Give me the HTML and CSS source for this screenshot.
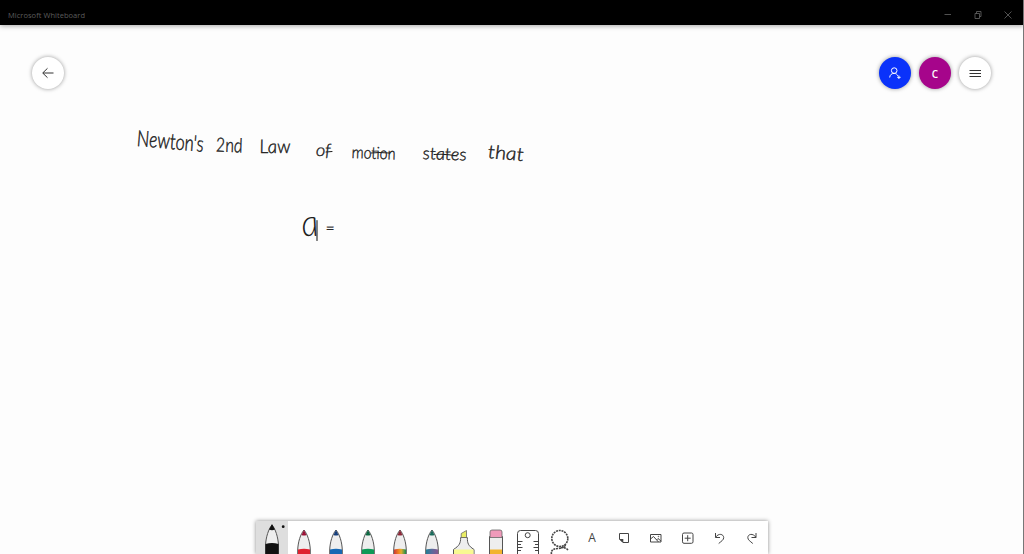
FILE: index.html
```
<!DOCTYPE html>
<html lang="en">
<head>
    <meta charset="UTF-8">
    <meta name="viewport" content="width=device-width, initial-scale=1.0">
    <title>Microsoft Whiteboard</title>
    <link rel="stylesheet" href="styles.css">
</head>
<body>
    <header class="titlebar">
        <span class="app-name">Microsoft Whiteboard</span>
        <div class="window-controls">
            <svg viewBox="0 0 10 10"><path d="M1.5 4.5h6.5"/></svg>
            <svg viewBox="0 0 10 10"><path d="M2 3.5h4.5v5H2zM3.5 3.5v-2H8v5H6.5"/></svg>
            <svg viewBox="0 0 10 10"><path d="M1.5 1.5l7 7M8.5 1.5l-7 7"/></svg>
        </div>
    </header>

    <nav class="top-actions">
        <button class="round back" aria-label="Back">
            <svg viewBox="0 0 16 16"><path d="M13.5 8H3M7.5 3.3L2.7 8l4.8 4.7"/></svg>
        </button>
        <button class="round invite" aria-label="Invite">
            <svg viewBox="0 0 16 16"><circle cx="7.2" cy="5.6" r="2.8"/><path d="M2.7 12.5c.2-2.6 1.7-4.100 4.500-4.100 1.800 0 3 1 3.700 2.500M10.200 12.300h3.400M11.900 10.600v3.400"/></svg>
        </button>
        <button class="round account">C</button>
        <button class="round menu" aria-label="Menu">
            <svg viewBox="0 0 16 16"><path d="M2.500 5.500h11.500M2.500 8.500h11.500M2.500 11.500h11.500"/></svg>
        </button>
    </nav>

    <main class="board">
        <svg class="ink" viewBox="0 0 1024 420">
            <g class="words">
                <text transform="translate(137 46) rotate(5) skewX(6) scale(1 1.3)" textLength="67" lengthAdjust="spacingAndGlyphs">Newton's</text>
                <text transform="translate(216 51.500) rotate(2) skewX(6) scale(1 1.150)" textLength="27" lengthAdjust="spacingAndGlyphs">2nd</text>
                <text transform="translate(260 53) skewX(6) scale(1 1.100)" textLength="31" lengthAdjust="spacingAndGlyphs">Law</text>
                <text transform="translate(316 56) skewX(2)" textLength="15" lengthAdjust="spacingAndGlyphs">of</text>
                <text transform="translate(352 58) rotate(2) skewX(6)" textLength="44" lengthAdjust="spacingAndGlyphs">motion</text>
                <text transform="translate(423 59) rotate(2) skewX(6)" textLength="44" lengthAdjust="spacingAndGlyphs">states</text>
                <text transform="translate(488 58) rotate(5) skewX(6) scale(1 1.100)" textLength="36" lengthAdjust="spacingAndGlyphs">that</text>
                <text class="variable" transform="translate(303 136) skewX(9) scale(1 1.150)" textLength="17" lengthAdjust="spacingAndGlyphs">a</text>
                <text transform="translate(326 134) skewX(4)" textLength="9" lengthAdjust="spacingAndGlyphs">=</text>
            </g>
            <!-- long pen strokes that run across the words -->
            <path class="stroke" d="M326 52l6-.5M371 53q8-1 18 0M434 54.500q12-1 23 1.500M317 120.500v20"/>
        </svg>
    </main>

    <footer class="toolbar">
        <button class="tool selected" aria-label="Black pen">
            <svg viewBox="0 0 32 33">
                <path class="barrel" d="M16 4c-3.500 4-6 12-6.500 20v10h13V24C22 16 19.500 8 16 4z"/>
                <path d="M9.500 23q6.500-2 13 0v11h-13z" fill="#111"/>
                <path d="M16 3l-3 5.500q3 1.500 6 0z" fill="#111"/>
                <circle cx="27.200" cy="5.700" r="1.400" fill="#111"/>
            </svg>
        </button>
        <button class="tool" aria-label="Red pen">
            <svg viewBox="0 0 32 33">
                <path class="barrel" d="M16 9c-3.500 4-6 12-6.300 20v5h12.600v-5C22 21 19.500 13 16 9z"/>
                <path d="M10 28.500q6-1.500 12 0V34H10z" fill="#df2230"/>
                <path d="M16 9l-2.500 5q2.500 1 5 0z" fill="#9b1237"/>
            </svg>
        </button>
        <button class="tool" aria-label="Blue pen">
            <svg viewBox="0 0 32 33">
                <path class="barrel" d="M16 9c-3.500 4-6 12-6.300 20v5h12.600v-5C22 21 19.500 13 16 9z"/>
                <path d="M10 28.500q6-1.500 12 0V34H10z" fill="#1768b4"/>
                <path d="M16 9l-2.500 5q2.500 1 5 0z" fill="#173f7c"/>
            </svg>
        </button>
        <button class="tool" aria-label="Green pen">
            <svg viewBox="0 0 32 33">
                <path class="barrel" d="M16 9c-3.500 4-6 12-6.300 20v5h12.600v-5C22 21 19.500 13 16 9z"/>
                <path d="M10 28.500q6-1.500 12 0V34H10z" fill="#0f9a57"/>
                <path d="M16 9l-2.500 5q2.500 1 5 0z" fill="#0d6842"/>
            </svg>
        </button>
        <button class="tool" aria-label="Rainbow pen">
            <svg viewBox="0 0 32 33">
                <defs>
                    <linearGradient id="rainbow"><stop offset="0" stop-color="#c83838"/><stop offset=".35" stop-color="#ef7d20"/><stop offset=".6" stop-color="#e3ad2c"/><stop offset="1" stop-color="#158a52"/></linearGradient>
                </defs>
                <path class="barrel" d="M16 9c-3.500 4-6 12-6.300 20v5h12.600v-5C22 21 19.500 13 16 9z"/>
                <path d="M10 28.500q6-1.500 12 0V34H10z" fill="url(#rainbow)"/>
                <path d="M16 9l-2.500 5q2.500 1 5 0z" fill="#8c2838"/>
            </svg>
        </button>
        <button class="tool" aria-label="Galaxy pen">
            <svg viewBox="0 0 32 33">
                <defs>
                    <linearGradient id="galaxy"><stop offset="0" stop-color="#217f95"/><stop offset=".5" stop-color="#5c6b9c"/><stop offset="1" stop-color="#85578e"/></linearGradient>
                </defs>
                <path class="barrel" d="M16 9c-3.500 4-6 12-6.300 20v5h12.600v-5C22 21 19.500 13 16 9z"/>
                <path d="M10 28.500q6-1.500 12 0V34H10z" fill="url(#galaxy)"/>
                <path d="M16 9l-2.500 5q2.500 1 5 0z" fill="#1b6c5c"/>
            </svg>
        </button>
        <button class="tool" aria-label="Highlighter">
            <svg viewBox="0 0 32 33">
                <path class="barrel" d="M12.700 16.500h6.600c.2 6 .7 8 6.700 12v6H5.500v-6c6-4 7-6 7.200-12z"/>
                <path d="M6 28.500h19.500V34H6z" fill="#f8f991"/>
                <path class="thin" d="M13.200 16.500v-4l5.300-3v7z" fill="#e9ed64"/>
            </svg>
        </button>
        <button class="tool" aria-label="Eraser">
            <svg viewBox="0 0 32 33">
                <path class="barrel" d="M9.500 15.500h13V34h-13z"/>
                <path d="M10 28.500h12V34H10z" fill="#f2b42f"/>
                <path class="thin" d="M10 16.500V11q0-2 2-2h8q2 0 2 2v5.500z" fill="#f09aba"/>
            </svg>
        </button>
        <button class="tool" aria-label="Ruler">
            <svg class="outline" viewBox="0 0 32 33">
                <path d="M5.500 34V12.500q0-3 3-3h15q3 0 3 3V34"/>
                <circle cx="15.700" cy="14.200" r="2.500"/>
                <path d="M6 20.500h4.500M6 23.500h3M6 26.500h4.500M6 29.500h3M26 20.500h-4.500M26 23.500h-3M26 26.500h-4.500M26 29.500h-3"/>
            </svg>
        </button>
        <button class="tool" aria-label="Lasso select">
            <svg class="outline lasso" viewBox="0 0 32 33">
                <circle cx="15.800" cy="17.500" r="8"/>
                <path d="M21.500 24c-2 4-8 3-11 4-2.500.8-3.500 2.500-3 5.500M17 26.500c3 0 6 .5 7 3"/>
            </svg>
        </button>
        <button class="tool text-tool">A</button>
        <button class="tool" aria-label="Note">
            <svg class="outline" viewBox="0 0 32 33"><path d="M11.500 12.500h9v9H15l-3.500-3.500z"/><path d="M11 18h4.300v4z" fill="#444" stroke="none"/></svg>
        </button>
        <button class="tool" aria-label="Image">
            <svg class="outline" viewBox="0 0 32 33"><path d="M10.500 13.500h10.500v7.500h-10.500zM10.500 18l3-2.500 5 5.500M16.500 19l1.500-1.500 3 2.500"/><circle cx="18.500" cy="15.500" r=".3"/></svg>
        </button>
        <button class="tool" aria-label="Insert">
            <svg class="outline" viewBox="0 0 32 33"><rect x="10.500" y="12" width="10.500" height="10.300" rx="1.500"/><path d="M15.700 14.200v6M12.700 17.200h6"/></svg>
        </button>
        <button class="tool" aria-label="Undo">
            <svg class="outline" viewBox="0 0 32 33"><path d="M11.500 12v4.500h4.500M11.500 16.300c3.200-4.500 8-3.300 8.200.2 0 2.500-2.200 3.500-5 6"/></svg>
        </button>
        <button class="tool" aria-label="Redo">
            <svg class="outline" viewBox="0 0 32 33"><path d="M20 12v4.500h-4.500M20 16.300c-3.200-4.500-8-3.300-8.200.2 0 2.500 2.200 3.500 5 6"/></svg>
        </button>
    </footer>
</body>
</html>
```

FILE: styles.css
```
:root {
    --board-bg: #fdfdfd;
    --ink: #202020;
    --icon: #444;
}

* {
    box-sizing: border-box;
}

body {
    margin: 0;
    height: 554px;
    display: flex;
    flex-direction: column;
    overflow: hidden;
    background: var(--board-bg);
    font-family: "Open Sans", "Noto Sans", sans-serif;
    border-right: 1px solid #777;
}

button {
    border: 0;
    padding: 0;
    font-family: inherit;
    display: flex;
    align-items: center;
    justify-content: center;
}

.titlebar {
    flex: none;
    height: 25px;
    width: 1024px;
    padding: 5px 11px 0 8px;
    display: flex;
    align-items: center;
    justify-content: space-between;
    background: #000;
    color: #5c5c5c;
    box-shadow: 0 1px 5px rgba(0, 0, 0, 0.35);
}

.app-name {
    font-size: 7.5px;
    letter-spacing: 0.04px;
}

.window-controls {
    display: flex;
    gap: 20px;
}

.window-controls svg {
    width: 10px;
    height: 10px;
    fill: none;
    stroke: #666;
    stroke-width: 0.8;
}

.top-actions {
    flex: none;
    display: flex;
    gap: 8px;
    padding: 32px 32px 0 32px;
}

.round {
    width: 32px;
    height: 32px;
    border-radius: 50%;
    background: #fff;
    box-shadow: 0 0 4px rgba(0, 0, 0, 0.4);
}

.round svg {
    width: 16px;
    height: 16px;
    fill: none;
    stroke: #333;
    stroke-width: 1;
}

.back {
    margin-right: auto;
}

.invite {
    background: #0a32fa;
}

.invite svg {
    stroke: #fff;
}

.account {
    background: #a6058b;
    color: #fff;
    font-size: 10px;
    font-weight: 600;
    padding-top: 1px;
}

.board {
    flex: 1;
    min-height: 0;
}

.ink {
    display: block;
    width: 1024px;
    height: 420px;
    margin-top: 11px;
}

.words {
    font-family: Lato, sans-serif;
    font-style: italic;
    font-weight: 300;
    font-size: 17px;
    fill: var(--ink);
    stroke: var(--ink);
    stroke-width: 0.35;
}

.words .variable {
    font-size: 33px;
    stroke-width: 0;
}

.stroke {
    fill: none;
    stroke: var(--ink);
    stroke-width: 1.1;
    stroke-linecap: round;
}

.toolbar {
    flex: none;
    align-self: flex-start;
    display: flex;
    height: 33px;
    margin-left: 256px;
    background: #fff;
    box-shadow: 0 0 4px rgba(0, 0, 0, 0.45);
    position: relative;
}

.tool {
    width: 32px;
    height: 33px;
    background: transparent;
}

.tool.selected {
    background: #dedede;
}

.tool svg {
    width: 32px;
    height: 33px;
}

.barrel {
    fill: #eee;
    stroke: #555;
    stroke-width: 1;
}

.thin {
    stroke: #666;
    stroke-width: 0.8;
}

.outline {
    fill: none;
    stroke: var(--icon);
    stroke-width: 1;
}

.lasso {
    stroke-width: 1.6;
    stroke-dasharray: 2 0.8;
}

.text-tool {
    font-size: 12px;
    color: var(--icon);
}
```
